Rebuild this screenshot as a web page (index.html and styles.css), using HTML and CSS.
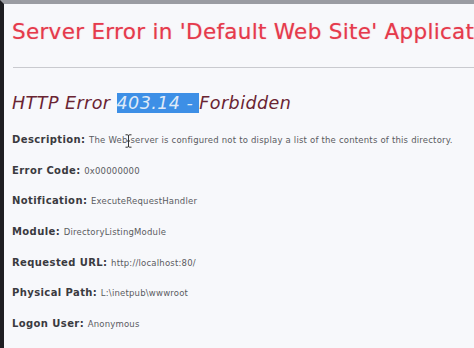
FILE: index.html
```html
<!DOCTYPE html>
<html>
<head>
<meta charset="utf-8">
<link rel="stylesheet" href="styles.css">
</head>
<body>
<div class="frame">
  <div class="page">
    <h1 class="title">Server Error in 'Default Web Site' Application</h1>
    <hr class="rule">
    <h2 class="status">HTTP Error <span class="sel">403.14 - </span>Forbidden</h2>
    <div class="details">
      <p class="row"><b>Description:</b> <span class="val">The Web<span class="cursor-wrap"><svg class="cursor" width="7" height="14" viewBox="0 0 7 14"><path d="M0.5 0.8 H2.5 Q3.5 0.8 3.5 2 V12 Q3.5 13.2 2.5 13.2 H0.5 M6.5 0.8 H4.5 Q3.5 0.8 3.5 2 M3.5 12 Q3.5 13.2 4.5 13.2 H6.5 M2 7 H5" fill="none" stroke="#333" stroke-width="1"/></svg></span> server is configured not to display a list of the contents of this directory.</span></p>
      <p class="row"><b>Error Code:</b> <span class="val">0x00000000</span></p>
      <p class="row"><b>Notification:</b> <span class="val">ExecuteRequestHandler</span></p>
      <p class="row"><b>Module:</b> <span class="val">DirectoryListingModule</span></p>
      <p class="row"><b>Requested URL:</b> <span class="val">http://localhost:80/</span></p>
      <p class="row"><b>Physical Path:</b> <span class="val">L:\inetpub\wwwroot</span></p>
      <p class="row"><b>Logon User:</b> <span class="val">Anonymous</span></p>
    </div>
  </div>
</div>
</body>
</html>
```

FILE: styles.css
```css
html, body {
  margin: 0;
  padding: 0;
  width: 474px;
  height: 348px;
  overflow: hidden;
  background: #f6f7fa;
}
.frame {
  width: 474px;
  height: 348px;
  box-sizing: border-box;
  border-left: 4px solid #1e1e22;
  border-top: 4px solid #9a9ca2;
  background: #f7f8fb;
  overflow: hidden;
}
.page {
  padding: 0 0 0 8px;
  font-family: "DejaVu Sans", Verdana, sans-serif;
}
.title {
  margin: 0;
  padding-top: 16px;
  font-size: 21.5px;
  letter-spacing: 0.3px;
  font-weight: normal;
  color: #e53a4c;
  white-space: nowrap;
  line-height: 24px;
  text-shadow: 0 0 1px rgba(240, 80, 100, 0.5);
}
.rule {
  margin: 23px 0 0 1px;
  border: 0;
  height: 1px;
  background: #c9cacf;
}
.status {
  margin: 23px 0 0 0;
  font-size: 17.5px;
  letter-spacing: 0.45px;
  font-style: italic;
  font-weight: normal;
  color: #6a2432;
  line-height: 24px;
  white-space: nowrap;
}
.sel {
  background: #3d8fe6;
  color: #dfeaf8;
}
.details {
  margin-top: 18px;
  display: flex;
  flex-direction: column;
  gap: 0;
}
.row {
  margin: 0;
  height: 30.7px;
  font-size: 10px;
  letter-spacing: 0.4px;
  line-height: 14px;
  color: #34343a;
  white-space: nowrap;
}
.row b {
  font-weight: bold;
  color: #3a3a40;
}
.val {
  font-size: 8.5px;
  letter-spacing: 0.2px;
  color: #5a5b61;
}
.cursor-wrap {
  position: relative;
  display: inline-block;
  width: 0;
}
.cursor {
  position: absolute;
  left: -3px;
  top: -9px;
}
```
